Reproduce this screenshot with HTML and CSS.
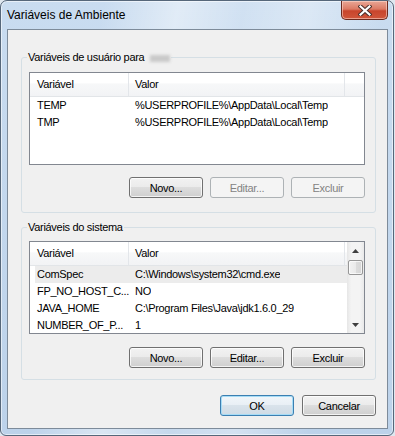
FILE: index.html
```html
<!DOCTYPE html>
<html lang="pt">
<head>
    <meta charset="UTF-8">
    <title>Variáveis de Ambiente</title>
    <link rel="stylesheet" href="styles.css">
</head>
<body>
    <div class="window">
        <div class="titlebar">
            <span class="title">Variáveis de Ambiente</span>
            <button class="close-btn" type="button">
                <svg width="14" height="11" viewBox="0 0 14 11">
                    <path d="M2.5 1.5 L11.5 9.5 M11.5 1.5 L2.5 9.5" stroke="#4a2f2a" stroke-width="4.2" stroke-linecap="square" fill="none"/>
                    <path d="M2.5 1.5 L11.5 9.5 M11.5 1.5 L2.5 9.5" stroke="#fff" stroke-width="2.2" stroke-linecap="square" fill="none"/>
                </svg>
            </button>
        </div>

        <div class="client">
            <fieldset class="group group-user">
                <legend>Variáveis de usuário para <span class="blurred"></span></legend>
                <div class="listview">
                    <div class="lv-body">
                        <div class="lv-header">
                            <div class="col-name">Variável</div>
                            <div class="col-value">Valor</div>
                        </div>
                        <div class="lv-row">
                            <div class="col-name">TEMP</div>
                            <div class="col-value">%USERPROFILE%\AppData\Local\Temp</div>
                        </div>
                        <div class="lv-row">
                            <div class="col-name">TMP</div>
                            <div class="col-value">%USERPROFILE%\AppData\Local\Temp</div>
                        </div>
                    </div>
                </div>
                <div class="actions">
                    <button class="btn" type="button">Novo...</button>
                    <button class="btn" type="button" disabled>Editar...</button>
                    <button class="btn" type="button" disabled>Excluir</button>
                </div>
            </fieldset>

            <fieldset class="group group-system">
                <legend>Variáveis do sistema</legend>
                <div class="listview">
                    <div class="lv-body">
                        <div class="lv-header">
                            <div class="col-name">Variável</div>
                            <div class="col-value">Valor</div>
                        </div>
                        <div class="lv-row selected">
                            <div class="col-name">ComSpec</div>
                            <div class="col-value">C:\Windows\system32\cmd.exe</div>
                        </div>
                        <div class="lv-row">
                            <div class="col-name">FP_NO_HOST_C...</div>
                            <div class="col-value">NO</div>
                        </div>
                        <div class="lv-row">
                            <div class="col-name">JAVA_HOME</div>
                            <div class="col-value">C:\Program Files\Java\jdk1.6.0_29</div>
                        </div>
                        <div class="lv-row">
                            <div class="col-name">NUMBER_OF_P...</div>
                            <div class="col-value">1</div>
                        </div>
                    </div>
                    <div class="scrollbar">
                        <div class="sb-arrow">
                            <svg width="7" height="4" viewBox="0 0 7 4"><path d="M0 4 L3.5 0 L7 4 Z" fill="#404040"/></svg>
                        </div>
                        <div class="sb-track">
                            <div class="sb-thumb"></div>
                        </div>
                        <div class="sb-arrow">
                            <svg width="7" height="4" viewBox="0 0 7 4"><path d="M0 0 L3.5 4 L7 0 Z" fill="#404040"/></svg>
                        </div>
                    </div>
                </div>
                <div class="actions">
                    <button class="btn" type="button">Novo...</button>
                    <button class="btn" type="button">Editar...</button>
                    <button class="btn" type="button">Excluir</button>
                </div>
            </fieldset>

            <div class="dialog-actions">
                <button class="btn btn-default" type="button">OK</button>
                <button class="btn" type="button">Cancelar</button>
            </div>
        </div>
    </div>
</body>
</html>
```

FILE: styles.css
```css
body {
    margin: 0;
    background-color: #dfe7ef;
    font-family: 'Liberation Sans', Arial, sans-serif;
    font-size: 11px;
    letter-spacing: -0.3px;
    color: #000;
}
.window {
    width: 394px;
    height: 436px;
    box-sizing: border-box;
    border: 1px solid #56677a;
    border-radius: 7px 7px 6px 6px;
    display: flex;
    flex-direction: column;
    background:
        linear-gradient(100deg, rgba(255,255,255,0) 22%, rgba(255,255,255,0.45) 38%, rgba(255,255,255,0.15) 52%, rgba(255,255,255,0.35) 66%, rgba(255,255,255,0) 82%),
        linear-gradient(#c9dcf0, #bcd2ea);
    box-shadow: inset 0 0 0 1px rgba(255,255,255,0.55);
}
.titlebar {
    height: 28px;
    display: flex;
    align-items: flex-start;
}
.title {
    padding: 7px 0 0 6px;
    font-size: 12px;
    line-height: 15px;
    letter-spacing: 0;
}
.close-btn {
    margin-left: auto;
    margin-right: 5px;
    width: 47px;
    height: 19px;
    padding: 0;
    border: 1px solid #6b2a1f;
    border-top: none;
    border-radius: 0 0 5px 5px;
    background: linear-gradient(#e9a796 0%, #dc7a64 45%, #c8452c 55%, #d0563b 100%);
    box-shadow: inset 0 0 0 1px rgba(255,220,210,0.55);
    display: flex;
    align-items: center;
    justify-content: center;
}
.close-btn svg {
    display: block;
}
.client {
    flex: 1;
    margin: 0 5px 6px 6px;
    border: 1px solid #7d8b9a;
    background-color: #f0f0f0;
    display: flex;
    flex-direction: column;
}
.group {
    margin: 0 11px 0 13px;
    padding: 0;
    border: 1px solid #d5dfe5;
    border-radius: 3px;
    min-width: 0;
}
.group-user {
    margin-top: 20px;
    padding-bottom: 14px;
}
.group-system {
    margin-top: 7px;
    padding-bottom: 11px;
}
.group legend {
    margin-left: 5px;
    padding: 0 1px;
    line-height: 15px;
}
.blurred {
    display: inline-block;
    width: 20px;
    height: 7px;
    margin-left: 3px;
    vertical-align: -1px;
    background-color: #c9c9c9;
    filter: blur(1.5px);
}
.listview {
    height: 93px;
    box-sizing: border-box;
    margin: 7px 10px 0 7px;
    border: 1px solid #828790;
    background-color: #fff;
    display: flex;
    overflow: hidden;
}
.group-system .listview {
    margin-top: 6px;
}
.lv-body {
    flex: 1;
    min-width: 0;
}
.lv-header {
    height: 23px;
    display: flex;
    border-bottom: 1px solid #e2e5e8;
    background: linear-gradient(#ffffff 0%, #ffffff 45%, #f7f8f9 46%, #f2f3f5 100%);
    line-height: 23px;
}
.lv-header .col-name {
    width: 99px;
    box-sizing: border-box;
    padding-left: 7px;
    border-right: 1px solid #e3e6ea;
}
.lv-header .col-value {
    width: 216px;
    box-sizing: border-box;
    padding-left: 6px;
    border-right: 1px solid #e3e6ea;
}
.lv-row {
    display: flex;
    margin-left: 5px;
    height: 17px;
    line-height: 17px;
    white-space: nowrap;
}
.lv-row.selected {
    background-color: #ececec;
}
.lv-row .col-name {
    width: 94px;
    box-sizing: border-box;
    padding-left: 2px;
    overflow: hidden;
}
.lv-row .col-value {
    padding-left: 6px;
    overflow: hidden;
}
.scrollbar {
    width: 17px;
    display: flex;
    flex-direction: column;
    background: linear-gradient(to right, #e6e6e6, #f4f4f4 25%, #f4f4f4 75%, #e9e9e9);
}
.sb-arrow {
    height: 17px;
    display: flex;
    align-items: center;
    justify-content: center;
}
.sb-arrow svg {
    display: block;
}
.sb-track {
    flex: 1;
    padding-top: 1px;
}
.sb-thumb {
    height: 15px;
    box-sizing: border-box;
    margin: 0 1px;
    border: 1px solid #979797;
    border-radius: 2px;
    background: linear-gradient(to right, #f2f2f2, #eaeaea 50%, #dcdcdc 51%, #d6d6d6);
    box-shadow: inset 0 0 0 1px rgba(255,255,255,0.7);
}
.actions {
    display: flex;
    justify-content: flex-end;
    gap: 7px;
    margin: 12px 10px 0 0;
}
.group-system .actions {
    margin-top: 13px;
}
.btn {
    width: 74px;
    height: 21px;
    padding: 0;
    border: 1px solid #707070;
    border-radius: 3px;
    background: linear-gradient(#f2f2f2 0%, #ebebeb 49%, #dddddd 50%, #cfcfcf 100%);
    box-shadow: inset 0 0 0 1px rgba(255,255,255,0.75);
    font-family: inherit;
    font-size: 11px;
    letter-spacing: -0.3px;
    color: #000;
}
.btn:disabled {
    border-color: #adb2b5;
    background: #f4f4f4;
    box-shadow: none;
    color: #838383;
}
.btn-default {
    border-color: #3c7fb1;
    background: linear-gradient(#f1f6fa 0%, #e8eff5 49%, #d9e3eb 50%, #cfdbe5 100%);
    box-shadow: inset 0 0 0 1px #a6dcf6;
}
.dialog-actions {
    display: flex;
    justify-content: flex-end;
    gap: 8px;
    margin: 15px 11px 0 0;
}
```
